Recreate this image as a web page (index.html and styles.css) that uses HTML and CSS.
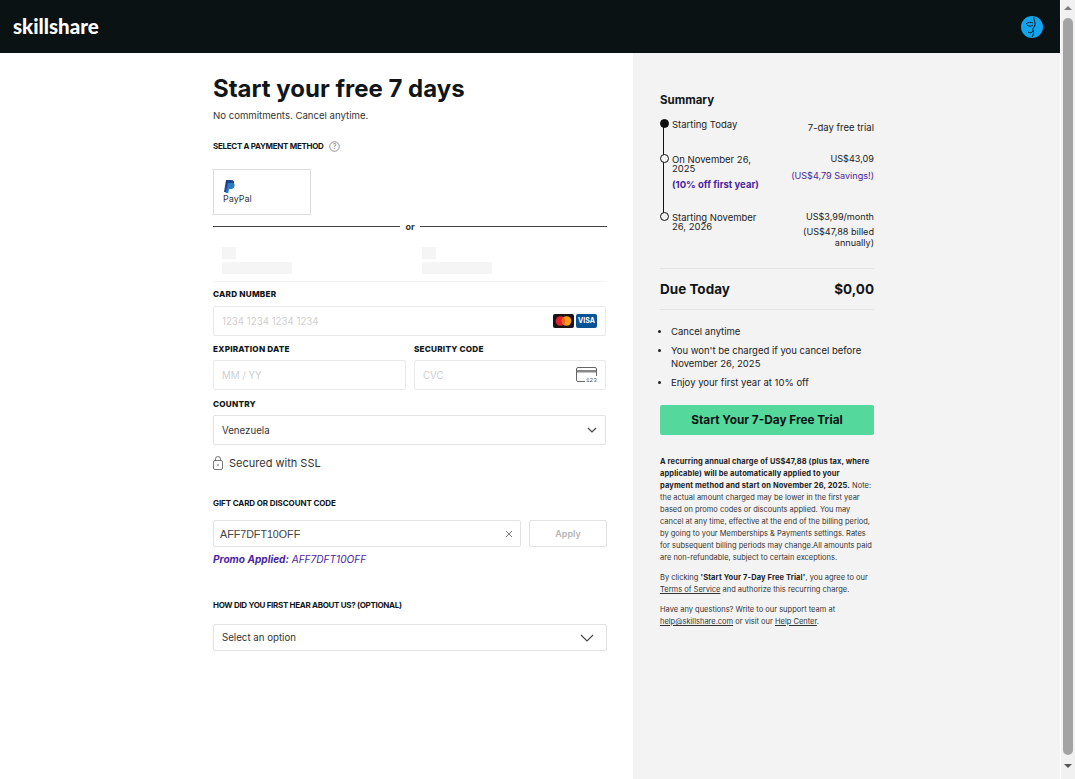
FILE: index.html
```html
<!DOCTYPE html>
<html lang="en">
<head>
    <meta charset="UTF-8">
    <meta name="viewport" content="width=device-width, initial-scale=1.0">
    <title>Skillshare Checkout</title>
    <link rel="stylesheet" href="styles.css">
</head>
<body>
<div class="page">
    <header class="topbar">
        <span class="logo">skillshare</span>
        <svg class="avatar" width="22" height="22" viewBox="0 0 22 22">
            <circle cx="11" cy="11" r="11" fill="#12a5ee"/>
            <path d="M13 1c-1 3 2 5 1 8s-3 3-2 5 1 4-1 7" fill="none" stroke="#06283a" stroke-width="1.100"/>
            <path d="M5 8c2-2 5-2 7-1M6 9c2 1.500 4 1.500 6 0M7 16c2 1 4 1 5-1" fill="none" stroke="#06283a" stroke-width="1"/>
        </svg>
    </header>

    <div class="columns">
        <main class="checkout">
            <h1>Start your free 7 days</h1>
            <p class="sub">No commitments. Cancel anytime.</p>

            <div class="method-label">
                <span class="label-tight">SELECT A PAYMENT METHOD</span>
                <svg width="11" height="11" viewBox="0 0 11 11">
                    <circle cx="5.500" cy="5.500" r="4.800" fill="none" stroke="#777" stroke-width=".8"/>
                    <text x="5.500" y="8" text-anchor="middle" class="help-mark">?</text>
                </svg>
            </div>

            <div class="paypal">
                <svg width="12" height="13" viewBox="0 0 12 13">
                    <path d="M3 0h5c2.500 0 3.500 1.500 3 3.500C10.500 6 9 7 7 7H5L4 12H1z" fill="#1f3f8f"/>
                    <path d="M5 3h4.500c1.500 0 2.500 1 2 3-.5 2.500-2 3-4 3H6l-.7 4H2.500z" fill="#2a7ac4"/>
                </svg>
                <span>PayPal</span>
            </div>

            <div class="or-row"><span>or</span></div>

            <div class="skeleton-row">
                <div class="skeleton"><i></i><b></b></div>
                <div class="skeleton"><i></i><b></b></div>
            </div>

            <label class="field-label">CARD NUMBER</label>
            <div class="input card-input">
                <span class="placeholder">1234 1234 1234 1234</span>
                <div class="card-logos">
                    <svg width="21" height="14" viewBox="0 0 21 14">
                        <rect width="21" height="14" rx="2" fill="#1c1414"/>
                        <circle cx="7.500" cy="7" r="4.800" fill="#e0222a"/>
                        <circle cx="13.500" cy="7" r="4.800" fill="#f79e1b"/>
                        <path d="M10.500 3.300a4.800 4.800 0 0 1 0 7.400 4.800 4.800 0 0 1 0-7.400z" fill="#f5601c"/>
                    </svg>
                    <span class="visa">VISA</span>
                </div>
            </div>

            <div class="two-col">
                <div>
                    <label class="field-label">EXPIRATION DATE</label>
                    <div class="input"><span class="placeholder">MM / YY</span></div>
                </div>
                <div>
                    <label class="field-label">SECURITY CODE</label>
                    <div class="input card-input">
                        <span class="placeholder">CVC</span>
                        <svg class="cvc-icon" width="21" height="16" viewBox="0 0 21 16">
                            <path d="M9 14.500H2a1.500 1.500 0 0 1-1.500-1.500V2A1.500 1.500 0 0 1 2 .5h17A1.500 1.500 0 0 1 20.500 2v7" fill="none" stroke="#666"/>
                            <rect x="1" y="3" width="19" height="2.500" fill="#888"/>
                            <text x="10" y="15" class="cvc-text">123</text>
                        </svg>
                    </div>
                </div>
            </div>

            <label class="field-label">COUNTRY</label>
            <div class="input select-input">
                <span>Venezuela</span>
                <svg width="10" height="6" viewBox="0 0 10 6"><path d="M1 1l4 4 4-4" fill="none" stroke="#444" stroke-width="1.200"/></svg>
            </div>

            <div class="ssl">
                <svg width="10" height="14" viewBox="0 0 10 14">
                    <rect x=".5" y="4.500" width="9" height="9" rx="1.500" fill="none" stroke="#555" stroke-width=".8"/>
                    <path d="M2.500 4.500V3a2.500 2.500 0 0 1 5 0v1.500" fill="none" stroke="#555" stroke-width=".8"/>
                    <circle cx="5" cy="9" r=".7" fill="#333"/>
                </svg>
                <span>Secured with SSL</span>
            </div>

            <label class="label-tight gift-label">GIFT CARD OR DISCOUNT CODE</label>
            <div class="promo-row">
                <div class="input promo-input">
                    <span>AFF7DFT10OFF</span>
                    <svg width="8" height="8" viewBox="0 0 8 8"><path d="M1 1l6 6M7 1L1 7" stroke="#666" stroke-width=".9"/></svg>
                </div>
                <button class="apply" type="button">Apply</button>
            </div>
            <p class="promo-note"><strong>Promo Applied:</strong> AFF7DFT10OFF</p>

            <label class="label-tight hear-label">HOW DID YOU FIRST HEAR ABOUT US? (OPTIONAL)</label>
            <div class="input select-input hear-select">
                <span>Select an option</span>
                <svg width="14" height="8" viewBox="0 0 14 8"><path d="M1 1l6 6 6-6" fill="none" stroke="#444" stroke-width="1.100"/></svg>
            </div>
        </main>

        <aside class="summary">
            <h2>Summary</h2>
            <div class="timeline">
                <div class="step step-one">
                    <div class="step-name">Starting Today</div>
                    <div class="step-price"><span class="price-low">7-day free trial</span></div>
                </div>
                <div class="step step-two">
                    <div class="step-name">On November 26, 2025<em>(10% off first year)</em></div>
                    <div class="step-price">US$43,09<span class="savings">(US$4,79 Savings!)</span></div>
                </div>
                <div class="step step-three">
                    <div class="step-name">Starting November 26, 2026</div>
                    <div class="step-price">US$3,99/month<span class="billed">(US$47,88 billed annually)</span></div>
                </div>
            </div>

            <div class="due">
                <span>Due Today</span>
                <span>$0,00</span>
            </div>

            <ul class="perks">
                <li>Cancel anytime</li>
                <li>You won't be charged if you cancel before November 26, 2025</li>
                <li>Enjoy your first year at 10% off</li>
            </ul>

            <button class="trial" type="button">Start Your 7-Day Free Trial</button>

            <p class="legal legal-first"><strong>A recurring annual charge of US$47,88 (plus tax, where applicable) will be automatically applied to your payment method and start on November 26, 2025.</strong> Note: the actual amount charged may be lower in the first year based on promo codes or discounts applied. You may cancel at any time, effective at the end of the billing period, by going to your Memberships &amp; Payments settings. Rates for subsequent billing periods may change.All amounts paid are non-refundable, subject to certain exceptions.</p>
            <p class="legal">By clicking <strong>'Start Your 7-Day Free Trial'</strong>, you agree to our <a>Terms of Service</a> and authorize this recurring charge.</p>
            <p class="legal">Have any questions? Write to our support team at <a>help@skillshare.com</a> or visit our <a>Help Center</a>.</p>
        </aside>
    </div>
</div>

<div class="scrollbar">
    <span class="arrow-up"></span>
    <span class="thumb"></span>
    <span class="arrow-down"></span>
</div>
</body>
</html>
```

FILE: styles.css
```css
* {
    box-sizing: border-box;
}

html, body {
    height: 100%;
    overflow: hidden;
}

body {
    margin: 0;
    display: flex;
    font-family: 'Inter', 'Liberation Sans', sans-serif;
    color: #101618;
    background: #fff;
}

.page {
    width: 1060px;
    display: flex;
    flex-direction: column;
}

.topbar {
    height: 53px;
    flex: none;
    background: #0a1214;
    display: flex;
    justify-content: space-between;
    align-items: center;
    padding: 0 17px 0 13px;
}

.logo {
    color: #fff;
    font-family: 'Lato', sans-serif;
    font-weight: 900;
    font-size: 20.500px;
    line-height: 24px;
    margin-top: -2px;
}

.columns {
    flex: 1;
    display: flex;
}

/* left column */
.checkout {
    width: 633px;
    padding: 21px 26px 0 213px;
}

h1 {
    margin: 0;
    font-size: 24px;
    line-height: 30px;
    font-weight: 700;
}

.sub {
    margin: 5px 0 0;
    font-size: 9.600px;
    line-height: 14px;
    color: #333;
}

.label-tight {
    display: block;
    font-size: 8px;
    line-height: 12px;
    font-weight: 700;
    letter-spacing: -.3px;
}

.method-label {
    margin-top: 17px;
    display: flex;
    align-items: center;
    gap: 5px;
}

.help-mark {
    font-size: 7px;
    fill: #777;
}

.paypal {
    margin-top: 17px;
    width: 98px;
    height: 46px;
    border: 1px solid #dcdcdc;
    padding: 10px 9px 0;
    font-size: 9px;
    line-height: 12px;
    color: #333;
}

.paypal svg, .paypal span {
    display: block;
}

.or-row {
    margin-top: 6px;
    height: 11px;
    display: flex;
    align-items: center;
    gap: 5px;
    font-size: 9px;
    font-weight: 700;
    color: #333;
}

.or-row::before, .or-row::after {
    content: "";
    flex: 1;
    height: 1px;
    background: #444;
}

.skeleton-row {
    height: 50px;
    padding: 15px 0 0 9px;
    display: flex;
    gap: 130px;
    border-bottom: 1px solid #f4f4f4;
}

.skeleton i, .skeleton b {
    display: block;
    background: #f5f5f5;
}

.skeleton i {
    width: 14px;
    height: 12px;
}

.skeleton b {
    margin-top: 3px;
    width: 70px;
    height: 12px;
}

.field-label {
    display: block;
    margin-top: 6px;
    font-size: 8.200px;
    line-height: 12px;
    font-weight: 800;
    letter-spacing: .2px;
}

.input {
    margin-top: 6px;
    height: 30px;
    border: 1px solid #e9e9e9;
    border-radius: 2px;
    display: flex;
    align-items: center;
    padding: 0 8px;
    font-size: 9.700px;
}

.placeholder {
    color: #cfcfcf;
}

.card-input {
    justify-content: space-between;
    width: 393px;
}

.card-logos {
    display: flex;
    gap: 2px;
}

.visa {
    width: 21px;
    height: 14px;
    border-radius: 2px;
    background: #0a5296;
    color: #fff;
    font-size: 7px;
    font-weight: 700;
    line-height: 14px;
    text-align: center;
}

.two-col {
    margin-top: 7px;
    display: grid;
    grid-template-columns: 193px 192px;
    gap: 8px;
}

.two-col .field-label {
    margin-top: 0;
}

.two-col .input {
    width: auto;
    margin-top: 5px;
}

.cvc-text {
    font-size: 6px;
    fill: #555;
    font-family: 'Liberation Mono', monospace;
}

.select-input {
    justify-content: space-between;
    width: 393px;
    margin-top: 5px;
    color: #333;
    border-color: #e2e2e2;
}

.two-col + .field-label {
    margin-top: 8px;
}

.ssl {
    margin-top: 11px;
    display: flex;
    align-items: center;
    gap: 6px;
    font-size: 11px;
    line-height: 14px;
    color: #333;
}

.gift-label {
    margin-top: 27px;
    letter-spacing: -.1px;
}

.promo-row {
    margin-top: 11px;
    display: flex;
    gap: 8px;
}

.promo-input {
    margin-top: 0;
    width: 308px;
    height: 27px;
    justify-content: space-between;
    padding: 0 7px 0 6px;
    font-family: 'Liberation Sans', sans-serif;
    font-size: 10.700px;
    color: #444;
    border-color: #e2e2e2;
}

.apply {
    width: 78px;
    height: 27px;
    border: 1px solid #e2e2e2;
    background: #fff;
    border-radius: 2px;
    font-family: inherit;
    font-size: 9px;
    font-weight: 600;
    color: #b5b5b5;
    padding: 0;
}

.promo-note {
    margin: 5px 0 0;
    font-size: 10.100px;
    line-height: 14px;
    font-style: italic;
    color: #4a1f9e;
}

.hear-label {
    margin-top: 33px;
}

.hear-select {
    margin-top: 13px;
    width: 394px;
    height: 27px;
    padding-right: 12px;
}

/* right column */
.summary {
    width: 427px;
    background: #f3f3f4;
    padding: 40px 186px 0 27px;
}

h2 {
    margin: 0;
    font-size: 11.500px;
    line-height: 14px;
    font-weight: 700;
}

.timeline {
    margin-top: 13px;
    position: relative;
    font-size: 9.500px;
    line-height: 9px;
}

.timeline::before {
    content: "";
    position: absolute;
    left: 3px;
    top: 2px;
    bottom: 50px;
    width: 1px;
    background: #111;
}

.step {
    position: relative;
    display: flex;
    justify-content: space-between;
    padding-left: 12px;
}

.step::before {
    content: "";
    position: absolute;
    left: 0;
    top: -1px;
    width: 7px;
    height: 7px;
    border-radius: 50%;
    border: 1px solid #111;
    background: #f3f3f4;
}

.step-one::before {
    background: #111;
}

.step-one {
    height: 35px;
}

.step-two {
    height: 58px;
}

.step-three {
    height: 55px;
}

.step-name {
    width: 92px;
    color: #222;
}

.step-name em {
    display: block;
    margin-top: 7px;
    font-style: normal;
    font-weight: 700;
    color: #4a1f9e;
}

.step-price {
    text-align: right;
    width: 110px;
    margin-top: -1px;
    color: #222;
    line-height: 10px;
}

.step-two .step-price, .step-three .step-price {
    font-size: 9.100px;
}

.price-low {
    display: block;
    margin-top: 4px;
}

.savings {
    display: block;
    margin-top: 7px;
    color: #4a1f9e;
}

.billed {
    display: block;
    margin-top: 4px;
    line-height: 11px;
}

.due {
    border-top: 1px solid #e4e4e4;
    border-bottom: 1px solid #e4e4e4;
    height: 42px;
    display: flex;
    justify-content: space-between;
    align-items: center;
    font-size: 13.500px;
    font-weight: 700;
}

.perks {
    margin: 15px 0 0;
    padding: 0 0 0 11px;
    font-size: 9.500px;
    line-height: 13px;
    color: #222;
}

.perks li {
    margin-bottom: 6px;
}

.perks li::marker {
    font-size: 9px;
}

.trial {
    display: block;
    margin-top: 16px;
    width: 214px;
    height: 30px;
    border: 0;
    border-radius: 2px;
    background: #54d89c;
    font-family: inherit;
    font-size: 11.800px;
    font-weight: 700;
    color: #0a1214;
    padding: 0;
}

.legal {
    margin: 0 0 8px;
    font-size: 7.500px;
    line-height: 12px;
    color: #333;
}

.legal-first {
    margin-top: 21px;
}

.legal strong {
    letter-spacing: .12px;
    color: #222;
}

.legal a {
    text-decoration: underline;
}

/* scrollbar */
.scrollbar {
    width: 15px;
    height: 779px;
    flex: none;
    background: #f1f1f1;
    display: flex;
    flex-direction: column;
    align-items: center;
    border-left: 1px solid #fff;
}

.thumb {
    width: 10px;
    height: 737px;
    margin: 8px 0 9px;
    background: #a3a3a3;
    border-radius: 5px;
}

.arrow-up, .arrow-down {
    width: 0;
    height: 0;
    border-left: 4px solid transparent;
    border-right: 4px solid transparent;
}

.arrow-up {
    margin-top: 6px;
    border-bottom: 4px solid #7a7a7a;
}

.arrow-down {
    border-top: 4px solid #555;
}
```
